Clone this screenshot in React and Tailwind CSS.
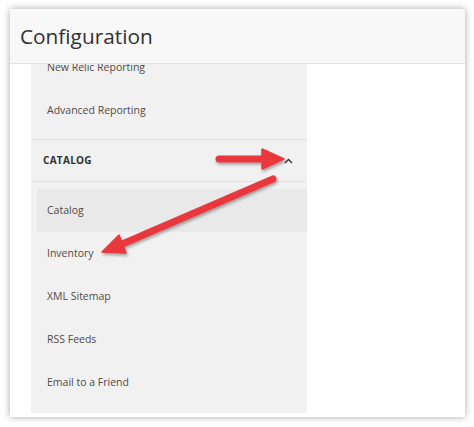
import React from "react";

const Item = ({ children, active }) => (
  <div
    className={
      "h-[43px] flex items-center pl-[10px] text-[10.5px] text-[#514943] " +
      (active ? "bg-[#e9e9e9]" : "")
    }
  >
    {children}
  </div>
);

export default function App() {
  return (
    <div
      className="relative w-[474px] h-[427px] bg-white overflow-hidden"
      style={{ fontFamily: '"Open Sans", "Liberation Sans", sans-serif' }}
    >
      <div className="pt-[9px] pl-[10px]">
        <div className="w-[455px] h-[408px] bg-white shadow-[0_0_7px_rgba(0,0,0,0.35)] flex flex-col">
          <div className="h-[55px] shrink-0 bg-[#f8f8f8] border-b border-[#e3e3e3] flex items-center pl-[10px] relative z-10">
            <span className="text-[20.8px] text-[#303030] leading-none mt-[0px]">Configuration</span>
          </div>
          <div className="flex-1 overflow-hidden flex items-start">
            <div className="ml-[21px] w-[276px] bg-[#f1f1f1] mt-[-18px]">
              <div className="pl-[6px] pb-[7px]">
                <Item>New Relic Reporting</Item>
                <Item>Advanced Reporting</Item>
              </div>
              <div className="border-t border-[#e3e3e3] h-[42px] flex items-center justify-between pl-[12px] pr-[14px]">
                <span className="text-[10px] font-bold tracking-[0.03em] text-[#303030]">CATALOG</span>
                <svg width="9" height="6" viewBox="0 0 9 6">
                  <path d="M1 5 L4.5 1.5 L8 5" fill="none" stroke="#333" strokeWidth="1.4" />
                </svg>
              </div>
              <div className="border-t border-[#e3e3e3] pt-[7px] pb-[9px] pl-[6px]">
                <Item active>Catalog</Item>
                <Item>Inventory</Item>
                <Item>XML Sitemap</Item>
                <Item>RSS Feeds</Item>
                <Item>Email to a Friend</Item>
              </div>
            </div>
          </div>
        </div>
      </div>
      <svg
        className="absolute inset-0 pointer-events-none"
        width="474"
        height="427"
        viewBox="0 0 474 427"
      >
        <defs>
          <filter id="sh" x="-20%" y="-20%" width="140%" height="140%">
            <feDropShadow dx="1" dy="2" stdDeviation="1.5" floodColor="#000" floodOpacity="0.35" />
          </filter>
        </defs>
        <g filter="url(#sh)" fill="#e8383d" stroke="#e8383d">
          <line x1="219" y1="159" x2="266" y2="159" strokeWidth="7" strokeLinecap="round" />
          <polygon points="262,149 284,159 262,169" strokeWidth="1.5" strokeLinejoin="round" />
          <line x1="273" y1="179" x2="120" y2="245" strokeWidth="7" strokeLinecap="round" />
          <polygon points="102,252 119,235 126,253" strokeWidth="1.5" strokeLinejoin="round" />
        </g>
      </svg>
    </div>
  );
}
